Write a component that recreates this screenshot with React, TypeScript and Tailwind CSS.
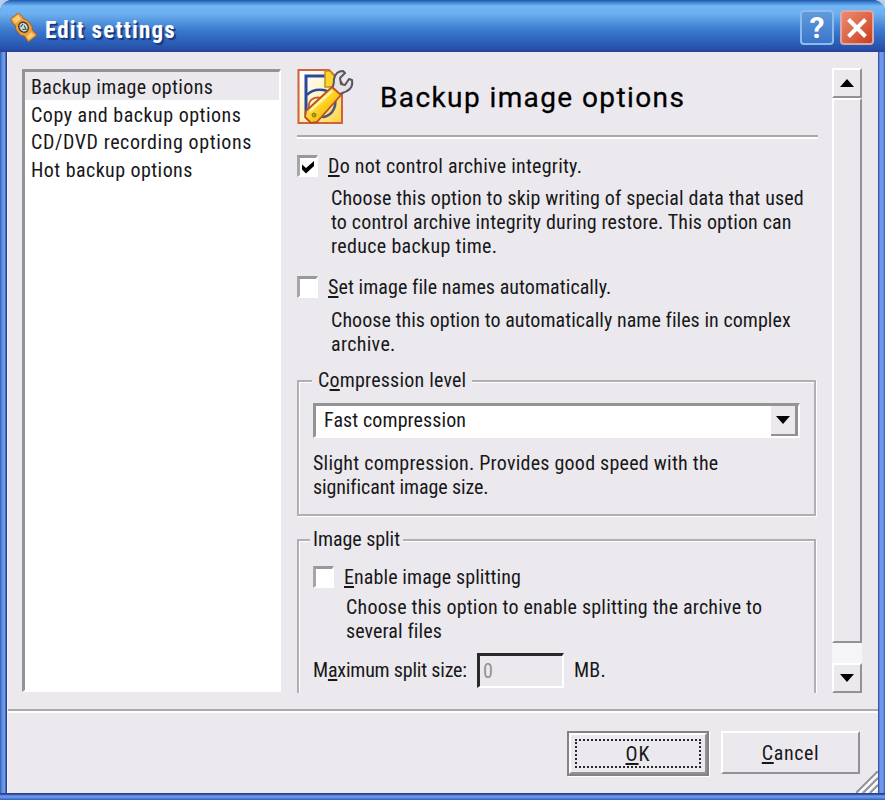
import React, { useState } from 'react';
import clsx from 'clsx';

const pages = [
  { name: 'Backup image options', className: 'tracking-[0.35px]' },
  { name: 'Copy and backup options', className: 'tracking-[0.5px]' },
  { name: 'CD/DVD recording options', className: 'tracking-[0.58px]' },
  { name: 'Hot backup options', className: 'tracking-[0.43px]' },
];

const raised = 'border-2 border-t-white border-l-white border-r-[#929294] border-b-[#929294] bg-[#ebe9ed]';

function AppIcon() {
  return (
    <svg className="h-[30px] w-[28px]" viewBox="0 0 28 30">
      <g transform="rotate(-38 14 14)">
        <path d="M9 0h10l1 5-.5 3 2 3v8l-2 3 .5 7h-11l.5-7-2.500-3v-8l2-3-1-3z" fill="#eda038" stroke="#a65c1b" strokeWidth="0.8" />
        <path d="M10.500 1.500h7v5h-7zM11 23.500h6.500v4h-6.500z" fill="#ffcf78" />
        <ellipse cx="14.300" cy="14.500" rx="5.200" ry="6" fill="#463a2f" />
        <ellipse cx="14.300" cy="14.500" rx="3.800" ry="4.600" fill="#cfe0df" />
        <path d="M12 12.500l4-1M12 15.500l3 2 1-4" fill="none" stroke="#45545a" strokeWidth="1.2" />
      </g>
    </svg>
  );
}

function OptionsIcon() {
  return (
    <svg className="h-[58px] w-[60px]" viewBox="0 0 60 58">
      <defs>
        <linearGradient id="paper" x1="0" y1="0" x2="1" y2="1">
          <stop offset="0.1" stopColor="#fff" />
          <stop offset="0.55" stopColor="#fff0b5" />
          <stop offset="1" stopColor="#ffd238" />
        </linearGradient>
        <linearGradient id="handle" x1="0" y1="0" x2="1" y2="1">
          <stop offset="0.2" stopColor="#ffe680" />
          <stop offset="0.5" stopColor="#ffd21f" />
          <stop offset="0.9" stopColor="#e99416" />
        </linearGradient>
      </defs>
      <path d="M1.500 2H32l13 13v40H1.500z" fill="url(#paper)" stroke="#d0613a" strokeWidth="2" />
      <path d="M9 47V8h20" fill="none" stroke="#28499c" strokeWidth="3" />
      <path d="M10 27c6-7 19-7 27 0" fill="none" stroke="#28499c" strokeWidth="2.5" />
      <path d="M37 27c4 10-1 20-10 22l-8-1" fill="#f7dd86" stroke="#4e5578" strokeWidth="2.5" />
      <path d="M12 42c-2-9 4-14 12-12" fill="none" stroke="#c75b31" strokeWidth="2" />
      <path d="M28 3v16h10V9l-5-6z" fill="#ffd330" stroke="#c68c1c" strokeWidth="1.5" />
      <path
        d="M35 20c2-3 2-6 2-9 1-5 4-8 9-8l2 2-5 5 1 6 4 1 4-6 3 1c1 5-1 9-5 11-3 2-5 1-8 4z"
        fill="#e3e3e8"
        stroke="#55565e"
        strokeWidth="2"
        strokeLinejoin="round"
      />
      <path d="M35 19l9 8-24 27-6 1-6-6 1-6z" fill="url(#handle)" stroke="#b94f25" strokeWidth="1.8" strokeLinejoin="round" />
      <path d="M35 23L13 43" stroke="#fff3a8" strokeWidth="2.5" />
      <circle cx="17" cy="47" r="2" fill="#a6a12a" stroke="#7d7a20" />
    </svg>
  );
}

function Arrow({ up }: { up?: boolean }) {
  return (
    <svg className="h-[8px] w-[14px]" viewBox="0 0 14 8">
      <path d={up ? 'M7 0l7 8H0z' : 'M0 0h14L7 8z'} fill="#000" />
    </svg>
  );
}

function Checkbox({ checked, onChange }: { checked: boolean; onChange: () => void }) {
  return (
    <button
      type="button"
      role="checkbox"
      aria-checked={checked}
      onClick={onChange}
      className="flex h-[22px] w-[21px] shrink-0 items-center justify-center border-t-3 border-l-3 border-r-2 border-b-2 border-t-[#99999c] border-l-[#a6a6a9] border-r-white border-b-white bg-white"
    >
      {checked && (
        <svg className="h-[14px] w-[14px]" viewBox="0 0 14 14">
          <path d="M1 4.500l4 3.500 8-7v5L5 13.500 1 9.500z" fill="#000" />
        </svg>
      )}
    </button>
  );
}

// Accelerator letter
function Key({ children }: { children: React.ReactNode }) {
  return <span className="underline decoration-2 underline-offset-2">{children}</span>;
}

export default function App() {
  const [page, setPage] = useState(0);
  const [noIntegrity, setNoIntegrity] = useState(true);
  const [autoNames, setAutoNames] = useState(false);
  const [split, setSplit] = useState(false);

  return (
    <div className="flex h-[800px] w-[885px] flex-col overflow-hidden bg-[#b9cdec] font-['Roboto','Liberation_Sans',sans-serif] text-[20px] leading-6 tracking-[0.2px] whitespace-nowrap text-[#18181a] [font-stretch:85%]">
      <div className="flex h-full flex-col overflow-hidden rounded-t-[12px] bg-[linear-gradient(90deg,#2e62b8_0,#6e9be9_3px,#6c98e6_5px,#263f91_6px,#263f91_878px,#7097ef_880px,#6d98ec_883px,#2f61b6_885px)]">
        <div className="flex h-[52px] shrink-0 items-center bg-[linear-gradient(180deg,#2255aa_0,#397cca_2px,#74b7f5_6px,#6bafef_14px,#4f91dc_23px,#3975cb_32px,#2c60b8_42px,#2750aa_49px,#283f94_52px)] pt-[3px] pr-[11px] pl-[9px]">
          <AppIcon />
          <h1 className="mt-[7px] ml-[8px] flex-1 text-[23px] font-bold tracking-[1.2px] text-white [text-shadow:2px_2px_1px_#17377f]">Edit settings</h1>
          <div className="flex gap-[6px]">
            <button className="flex h-[35px] w-[34px] items-center justify-center rounded-[4px] border-2 border-[#8dbcec] bg-linear-to-b from-[#5f9bdc] to-[#3c75c9] text-[30px] font-bold text-white [font-stretch:100%]">
              ?
            </button>
            <button className="flex h-[35px] w-[34px] items-center justify-center rounded-[4px] border-2 border-[#d7a9af] bg-linear-to-br from-[#ec8b6f] to-[#cb3c18]">
              <svg className="h-[22px] w-[22px]" viewBox="0 0 22 22">
                <path d="M2.500 2.500l17 17M19.500 2.500l-17 17" stroke="#fff" strokeWidth="4" />
              </svg>
            </button>
          </div>
        </div>

        <div className="mx-[7px] flex h-[741px] shrink-0 flex-col border-l border-[#f5f4fa] bg-[#ebe9ed]">
          <div className="flex h-[659px] border-b-2 border-[#aaaaad] pt-[16px] pl-[14px]">
            <ul className="mt-px h-[623px] w-[259px] border-t-3 border-l-3 border-r-2 border-b-2 border-t-[#949497] border-l-[#949497] border-r-white border-b-white bg-white">
              {pages.map((p, i) => (
                <li
                  key={p.name}
                  onClick={() => setPage(i)}
                  className={clsx('flex h-[27.7px] items-center pt-[2px] pl-[6px]', p.className, i === page && 'bg-[#ebe9ed]')}
                >
                  {p.name}
                </li>
              ))}
            </ul>

            <div className="ml-[16px] h-[625px] w-[521px] overflow-hidden">
              <div className="flex h-[69px] border-b-2 border-[#a9a9ac]">
                <OptionsIcon />
                <h2 className="mt-[12px] ml-[23px] text-[28px] leading-9 tracking-[1.4px] text-black [font-stretch:100%] [-webkit-text-stroke:0.3px_#000]">Backup image options</h2>
              </div>
              <div className="h-[2px] bg-white" />

              <label className="mt-[15px] flex h-6 items-center gap-[10px]">
                <Checkbox checked={noIntegrity} onChange={() => setNoIntegrity(!noIntegrity)} />
                <span className="tracking-[0.24px]"><Key>D</Key>o not control archive integrity.</span>
              </label>
              <p className="mt-[8px] pl-[34px] tracking-[0.15px]">
                Choose this option to skip writing of special data that used<br />
                to control archive integrity during restore. This option can<br />
                <span className="tracking-[0.33px]">reduce backup time.</span>
              </p>

              <label className="mt-[17px] flex h-6 items-center gap-[10px]">
                <Checkbox checked={autoNames} onChange={() => setAutoNames(!autoNames)} />
                <span className="tracking-[0.07px]"><Key>S</Key>et image file names automatically.</span>
              </label>
              <p className="mt-[9px] pl-[34px] tracking-[0.05px]">
                Choose this option to automatically name files in complex<br />
                <span className="tracking-[0.33px]">archive.</span>
              </p>

              <section className="mt-[24px] h-[136px] w-[519px] border-2 border-[#b0b0b3] pl-[14px] shadow-[1px_1px_0_#fff,inset_1px_1px_0_#fff]">
                <h3 className="-mt-[14px] ml-[-1px] w-fit bg-[#ebe9ed] px-[6px]">C<Key>o</Key>mpression level</h3>
                <div className="mt-[11px] flex h-[35px] w-[487px] items-center border-t-3 border-l-3 border-r-2 border-b-2 border-t-[#949497] border-l-[#949497] border-r-white border-b-white bg-white pl-[8px]">
                  <span className="flex-1 pb-[2px] tracking-[0.1px]">Fast compression</span>
                  <button className="flex h-full w-[27px] items-center justify-center border-r-3 border-b-2 border-[#929294] bg-[#ebe9ed]">
                    <Arrow />
                  </button>
                </div>
                <p className="mt-[13px]">
                  <span className="tracking-[0.24px]">Slight compression. Provides good speed with the</span><br />
                  <span className="tracking-[-0.1px]">significant image size.</span>
                </p>
              </section>

              <section className="mt-[23px] h-[180px] w-[519px] border-2 border-[#b0b0b3] pl-[14px] shadow-[1px_1px_0_#fff,inset_1px_1px_0_#fff]">
                <h3 className="-mt-[14px] ml-[-3px] w-fit bg-[#ebe9ed] px-[3px] tracking-[-0.05px]">Image split</h3>
                <label className="mt-[14px] flex h-6 items-center gap-[10px]">
                  <Checkbox checked={split} onChange={() => setSplit(!split)} />
                  <span className="tracking-[0.1px]"><Key>E</Key>nable image splitting</span>
                </label>
                <p className="mt-[6px] pl-[33px]">
                  Choose this option to enable splitting the archive to<br />
                  <span className="tracking-[0.1px]">several files</span>
                </p>
                <div className="mt-[10px] flex h-[35px] items-center">
                  <span className="w-[164px] pb-[2px] tracking-[-0.2px]">M<Key>a</Key>ximum split size:</span>
                  <span className="flex h-[35px] w-[87px] items-center border-t-3 border-l-3 border-r-2 border-b-2 border-t-[#29292b] border-l-[#29292b] border-r-white border-b-white pl-[3px] text-[#929294]">0</span>
                  <span className="ml-[10px] pb-[2px]">MB.</span>
                </div>
              </section>
            </div>

            <div className="ml-[14px] flex h-[625px] w-[30px] flex-col bg-[#f5f4f6]">
              <button className={clsx('flex h-[30px] items-center justify-center', raised)}><Arrow up /></button>
              <div className={clsx('h-[545px]', raised)} />
              <div className="flex-1" />
              <button className={clsx('flex h-[30px] items-center justify-center', raised)}><Arrow /></button>
            </div>
          </div>

          <div className="relative flex h-[82px] gap-[12px] border-t-2 border-white pt-[18px] pl-[559px]">
            <button className="h-[45px] w-[142px] border-2 border-[#838386] shadow-[1px_1px_0_#fff]">
              <span className={clsx('flex h-full items-center justify-center', raised)}>
                <span className="flex h-[29px] w-[126px] items-center justify-center border-2 border-dotted border-[#29292b]">
                  <span className="tracking-[1px]"><Key>O</Key>K</span>
                </span>
              </span>
            </button>
            <button className={clsx('h-[43px] w-[139px] tracking-[0.6px]', raised)}><Key>C</Key>ancel</button>
            <svg className="absolute right-0 bottom-0 h-[22px] w-[22px]" viewBox="0 0 22 22">
              <path d="M0 22L22 0M7 22L22 7M14 22l8-8" stroke="#929496" strokeWidth="2" />
              <path d="M3 22L22 3M10 22l12-12M17 22l5-5" stroke="#fff" strokeWidth="1.500" />
            </svg>
          </div>
        </div>
        <div className="flex-1 bg-[linear-gradient(180deg,#263f91_0,#263f91_1px,#7097ef_3px,#6d98ec_4px,#2f61b6_7px)]" />
      </div>
    </div>
  );
}
